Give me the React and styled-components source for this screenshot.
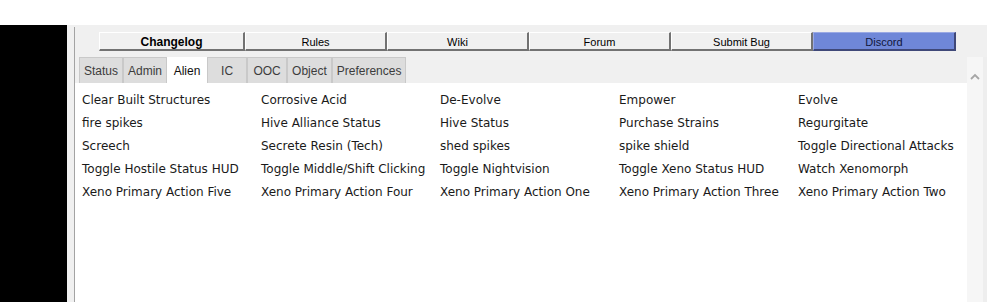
import React from "react";
import styled, { createGlobalStyle } from "styled-components";

const Global = createGlobalStyle`
  html, body { margin: 0; padding: 0; background: #ffffff; overflow: hidden; }
`;

const Page = styled.div`
  display: flex;
  flex-direction: column;
  height: 302px;
`;

const TopStrip = styled.div`
  height: 25px;
  flex: none;
  background: #ffffff;
`;

const Body = styled.div`
  flex: 1;
  display: flex;
  min-height: 0;
`;

const Sidebar = styled.div`
  width: 67px;
  flex: none;
  background: #000000;
`;

const Panel = styled.div`
  flex: 1;
  display: flex;
  background: #f0f0f0;
  padding: 2px 0 0 7px;
  min-width: 0;
`;

const Frame = styled.div`
  flex: 1;
  display: flex;
  flex-direction: column;
  border-left: 1px solid #a3a3a3;
  min-width: 0;
`;

const ButtonBar = styled.div`
  display: flex;
  margin: 5px 0 0 24px;
  width: 857px;
  height: 19px;
`;

const TopButton = styled.div`
  box-sizing: border-box;
  width: ${(p) => p.$w}px;
  height: 19px;
  display: flex;
  align-items: center;
  justify-content: center;
  background: ${(p) => (p.$accent ? "#6f87d8" : "#f0f0f0")};
  border-top: 1px solid ${(p) => (p.$accent ? "#9aa9e4" : "#ffffff")};
  border-left: 1px solid ${(p) => (p.$accent ? "#9aa9e4" : "#ffffff")};
  border-right: 2px solid ${(p) => (p.$accent ? "#3f4878" : "#727272")};
  border-bottom: 2px solid ${(p) => (p.$accent ? "#3f4878" : "#727272")};
  font-family: "Liberation Sans", Arial, sans-serif;
  font-size: ${(p) => (p.$bold ? "12px" : "11px")};
  font-weight: ${(p) => (p.$bold ? 700 : 400)};
  color: ${(p) => (p.$accent ? "#10163a" : "#000000")};
  padding-top: 1px;
`;

const Main = styled.div`
  flex: 1;
  display: flex;
  margin-top: 6px;
  min-height: 0;
`;

const LeftCol = styled.div`
  width: 892px;
  flex: none;
  display: flex;
  flex-direction: column;
`;

const TabRow = styled.div`
  display: flex;
  height: 26px;
  padding-left: 4px;
  flex: none;
`;

const Tab = styled.div`
  box-sizing: border-box;
  min-width: 40px;
  height: 26px;
  padding: 0 4px;
  display: flex;
  align-items: center;
  justify-content: center;
  background: ${(p) => (p.$active ? "#ffffff" : "#dddddd")};
  border: 1px solid ${(p) => (p.$active ? "#ffffff" : "#c9c9c9")};
  border-bottom: none;
  font-family: "Liberation Sans", Arial, sans-serif;
  font-size: 12px;
  color: ${(p) => (p.$active ? "#111111" : "#3c3c3c")};
`;

const Content = styled.div`
  flex: 1;
  background: #ffffff;
  padding: 6px 0 0 7px;
  display: grid;
  grid-template-columns: repeat(4, 179px) 1fr;
  grid-auto-rows: 23px;
  align-content: start;
  overflow: hidden;
  min-height: 0;
`;

const Verb = styled.div`
  font-family: "DejaVu Sans", Verdana, sans-serif;
  font-size: 12px;
  line-height: 23px;
  color: #1a1a1a;
  white-space: nowrap;
`;

const Scrollbar = styled.div`
  width: 16px;
  flex: none;
  background: #f6f6f6;
  display: flex;
  justify-content: center;
  align-items: flex-start;
  padding-top: 16px;
  box-sizing: border-box;
`;

const RightEdge = styled.div`
  flex: 1;
  background: #eeeeee;
`;

const buttons = [
  { label: "Changelog", w: 146, bold: true },
  { label: "Rules", w: 142 },
  { label: "Wiki", w: 142 },
  { label: "Forum", w: 142 },
  { label: "Submit Bug", w: 142 },
  { label: "Discord", w: 143, accent: true },
];

const tabs = ["Status", "Admin", "Alien", "IC", "OOC", "Object", "Preferences"];

const verbs = [
  "Clear Built Structures", "Corrosive Acid", "De-Evolve", "Empower", "Evolve",
  "fire spikes", "Hive Alliance Status", "Hive Status", "Purchase Strains", "Regurgitate",
  "Screech", "Secrete Resin (Tech)", "shed spikes", "spike shield", "Toggle Directional Attacks",
  "Toggle Hostile Status HUD", "Toggle Middle/Shift Clicking", "Toggle Nightvision", "Toggle Xeno Status HUD", "Watch Xenomorph",
  "Xeno Primary Action Five", "Xeno Primary Action Four", "Xeno Primary Action One", "Xeno Primary Action Three", "Xeno Primary Action Two",
];

export default function App() {
  return (
    <>
      <Global />
      <Page>
        <TopStrip />
        <Body>
          <Sidebar />
          <Panel>
            <Frame>
              <ButtonBar>
                {buttons.map((b) => (
                  <TopButton key={b.label} $w={b.w} $bold={b.bold} $accent={b.accent}>
                    {b.label}
                  </TopButton>
                ))}
              </ButtonBar>
              <Main>
                <LeftCol>
                  <TabRow>
                    {tabs.map((t) => (
                      <Tab key={t} $active={t === "Alien"}>
                        {t}
                      </Tab>
                    ))}
                  </TabRow>
                  <Content>
                    {verbs.map((v) => (
                      <Verb key={v}>{v}</Verb>
                    ))}
                  </Content>
                </LeftCol>
                <Scrollbar>
                  <svg width="10" height="7" viewBox="0 0 10 7">
                    <path d="M1 6 L5 2 L9 6" fill="none" stroke="#a6a6a6" strokeWidth="1.8" />
                  </svg>
                </Scrollbar>
                <RightEdge />
              </Main>
            </Frame>
          </Panel>
        </Body>
      </Page>
    </>
  );
}
